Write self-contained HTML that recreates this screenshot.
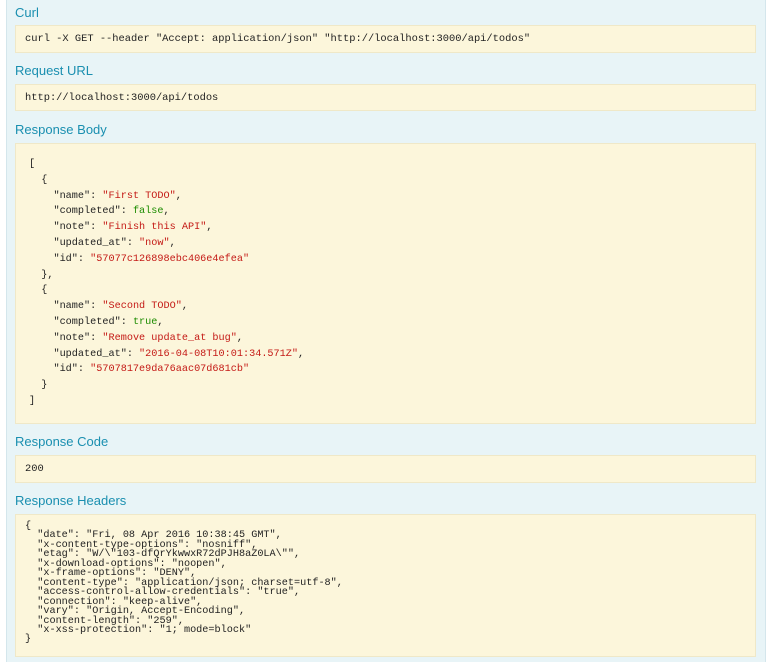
<!DOCTYPE html>
<html><head><style>
body{margin:0;background:#fff;width:768px;height:662px;overflow:hidden;font-family:"Liberation Sans",sans-serif}
.panel{position:absolute;left:6px;top:0;width:758px;height:662px;background:#e8f4f7;border-left:1px solid #d4e6ec;border-right:1px solid #d4e6ec}
h4{position:absolute;left:15px;margin:0;font-weight:normal;font-size:13px;color:#1a8fb0}
.box{position:absolute;left:15px;width:741px;background:#fcf6db;border:1px solid #efe8c8;box-sizing:border-box;font-family:"Liberation Mono",monospace;font-size:10.4px;color:#222;white-space:pre;margin:0}
.s{color:#c41a16}.b{color:#1c8c00}
</style></head><body>
<div class="panel"></div>
<h4 style="top:5px">Curl</h4>
<div class="box" style="top:25px;height:28px;padding:7px 0 0 9px">curl -X GET --header "Accept: application/json" "http://localhost:3000/api/todos"</div>
<h4 style="top:63px">Request URL</h4>
<div class="box" style="top:84px;height:27px;padding:7px 0 0 9px">http://localhost:3000/api/todos</div>
<h4 style="top:122px">Response Body</h4>
<div class="box" style="top:143px;height:281px;padding:13px 0 0 13px;line-height:15.8px;font-size:10.2px">[
  {
    "name": <span class="s">"First TODO"</span>,
    "completed": <span class="b">false</span>,
    "note": <span class="s">"Finish this API"</span>,
    "updated_at": <span class="s">"now"</span>,
    "id": <span class="s">"57077c126898ebc406e4efea"</span>
  },
  {
    "name": <span class="s">"Second TODO"</span>,
    "completed": <span class="b">true</span>,
    "note": <span class="s">"Remove update_at bug"</span>,
    "updated_at": <span class="s">"2016-04-08T10:01:34.571Z"</span>,
    "id": <span class="s">"5707817e9da76aac07d681cb"</span>
  }
]</div>
<h4 style="top:434px">Response Code</h4>
<div class="box" style="top:455px;height:28px;padding:7px 0 0 9px">200</div>
<h4 style="top:493px">Response Headers</h4>
<div class="box" style="top:514px;height:143px;padding:7px 0 0 9px;font-size:10.2px;line-height:9.45px">{
  "date": "Fri, 08 Apr 2016 10:38:45 GMT",
  "x-content-type-options": "nosniff",
  "etag": "W/\"103-dfQrYkwwxR72dPJH8aZ0LA\"",
  "x-download-options": "noopen",
  "x-frame-options": "DENY",
  "content-type": "application/json; charset=utf-8",
  "access-control-allow-credentials": "true",
  "connection": "keep-alive",
  "vary": "Origin, Accept-Encoding",
  "content-length": "259",
  "x-xss-protection": "1; mode=block"
}</div>
</body></html>
